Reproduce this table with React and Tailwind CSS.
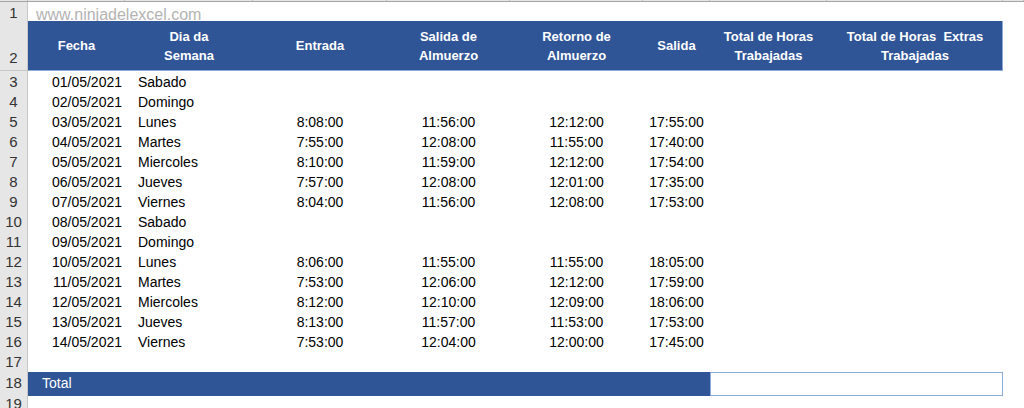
import React from 'react';

const cols =
  'grid grid-cols-[28px_97px_128px_134px_123px_133px_67px_117px_176px_1fr]';

const rows = [
  ['01/05/2021', 'Sabado', '', '', '', ''],
  ['02/05/2021', 'Domingo', '', '', '', ''],
  ['03/05/2021', 'Lunes', '8:08:00', '11:56:00', '12:12:00', '17:55:00'],
  ['04/05/2021', 'Martes', '7:55:00', '12:08:00', '11:55:00', '17:40:00'],
  ['05/05/2021', 'Miercoles', '8:10:00', '11:59:00', '12:12:00', '17:54:00'],
  ['06/05/2021', 'Jueves', '7:57:00', '12:08:00', '12:01:00', '17:35:00'],
  ['07/05/2021', 'Viernes', '8:04:00', '11:56:00', '12:08:00', '17:53:00'],
  ['08/05/2021', 'Sabado', '', '', '', ''],
  ['09/05/2021', 'Domingo', '', '', '', ''],
  ['10/05/2021', 'Lunes', '8:06:00', '11:55:00', '11:55:00', '18:05:00'],
  ['11/05/2021', 'Martes', '7:53:00', '12:06:00', '12:12:00', '17:59:00'],
  ['12/05/2021', 'Miercoles', '8:12:00', '12:10:00', '12:09:00', '18:06:00'],
  ['13/05/2021', 'Jueves', '8:13:00', '11:57:00', '11:53:00', '17:53:00'],
  ['14/05/2021', 'Viernes', '7:53:00', '12:04:00', '12:00:00', '17:45:00'],
];

function RowNum({ n, bottom }) {
  return (
    <div
      className={`bg-[#e6e6e6] border-b border-r border-[#c8c8c8] text-[#333] text-[15px] flex justify-center ${
        bottom ? 'items-end pb-[1px]' : 'items-center'
      }`}
    >
      {n}
    </div>
  );
}

export default function App() {
  return (
    <div className="w-[1024px] h-[408px] overflow-hidden bg-white text-[14px] text-black font-['Liberation_Sans',Arial,sans-serif]">
      {/** COLUMN HEADER EDGE */}
      <div className={`${cols} h-[2px] bg-[#e6e6e6] border-b border-[#a6a6a6]`}>
        {Array.from({ length: 10 }).map((_, i) => (
          <div key={i} className="border-r border-[#bdbdbd]" />
        ))}
      </div>

      {/** ROW 1 */}
      <div className={`${cols} h-[19px]`}>
        <RowNum n={1} />
        <div className="col-span-9 pl-[8px] flex items-center pt-[2px] text-[16px] text-[#b3b3b3] leading-none">
          www.ninjadelexcel.com
        </div>
      </div>

      {/** ROW 2 HEADER */}
      <div className={`${cols} h-[50px]`}>
        <RowNum n={2} bottom />
        <div className="col-span-8 grid grid-cols-[97px_128px_134px_123px_133px_67px_117px_176px] bg-[#2f5597] border-b border-r border-[#8ea9db] text-white font-bold text-[13px] leading-[19px]">
          {[
            'Fecha',
            'Dia da\nSemana',
            'Entrada',
            'Salida de\nAlmuerzo',
            'Retorno de\nAlmuerzo',
            'Salida',
            'Total de Horas\nTrabajadas',
            'Total de Horas  Extras\nTrabajadas',
          ].map((t) => (
            <div
              key={t}
              className="flex items-center justify-center text-center whitespace-pre"
            >
              {t}
            </div>
          ))}
        </div>
        <div />
      </div>

      {/** DATA ROWS */}
      {rows.map((r, i) => (
        <div key={r[0]} className={`${cols} h-[20px]`}>
          <RowNum n={i + 3} />
          <div className="flex items-center justify-end pr-[3px]">{r[0]}</div>
          <div className="flex items-center pl-[13px]">{r[1]}</div>
          <div className="flex items-center justify-center">{r[2]}</div>
          <div className="flex items-center justify-center">{r[3]}</div>
          <div className="flex items-center justify-center">{r[4]}</div>
          <div className="flex items-center justify-center">{r[5]}</div>
          <div />
          <div />
          <div />
        </div>
      ))}

      {/** ROW 17 */}
      <div className={`${cols} h-[21px]`}>
        <RowNum n={17} />
      </div>

      {/** TOTAL */}
      <div className={`${cols} h-[21px]`}>
        <RowNum n={18} />
        <div className="col-span-6 bg-[#2f5597] text-white flex items-center pl-[14px]">
          Total
        </div>
        <div className="col-span-2 border border-[#8ea9db]" />
        <div />
      </div>

      {/** ROW 19 */}
      <div className={`${cols} h-[20px]`}>
        <RowNum n={19} />
      </div>
    </div>
  );
}
